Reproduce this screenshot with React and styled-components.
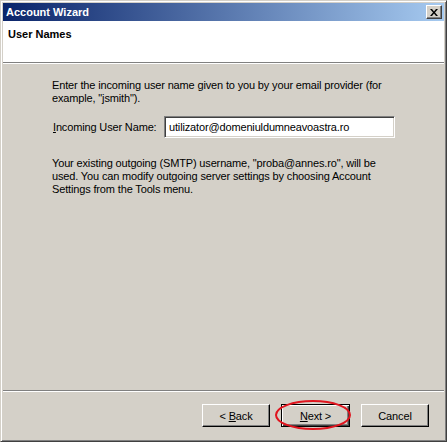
import React from "react";
import styled, { createGlobalStyle } from "styled-components";

const GlobalStyle = createGlobalStyle`
  html, body {
    margin: 0;
    padding: 0;
    background: #d4d0c8;
  }
  body {
    font-family: "Liberation Sans", Arial, sans-serif;
    font-size: 11px;
    letter-spacing: -0.15px;
    color: #000;
  }
`;

const Window = styled.div`
  box-sizing: border-box;
  width: 447px;
  height: 442px;
  display: flex;
  flex-direction: column;
  background: #d4d0c8;
  border-top: 1px solid #d4d0c8;
  border-left: 1px solid #d4d0c8;
  border-right: 1px solid #404040;
  border-bottom: 1px solid #404040;
  box-shadow: inset 1px 1px 0 #fff, inset -1px -1px 0 #808080;
  padding: 2px;
`;

const TitleBar = styled.div`
  height: 18px;
  display: flex;
  align-items: center;
  justify-content: space-between;
  padding: 0 2px 0 3px;
  background: linear-gradient(to right, #0a246a, #a6caf0);
  color: #fff;
  font-weight: 700;
  font-size: 11px;
  letter-spacing: 0;
`;

const CloseButton = styled.div`
  box-sizing: border-box;
  width: 16px;
  height: 14px;
  display: flex;
  align-items: center;
  justify-content: center;
  background: #d4d0c8;
  border-top: 1px solid #fff;
  border-left: 1px solid #fff;
  border-right: 1px solid #404040;
  border-bottom: 1px solid #404040;
  box-shadow: inset -1px -1px 0 #808080;
`;

const Header = styled.div`
  height: 42px;
  background: #fff;
  padding: 7px 0 0 5px;
  box-sizing: border-box;
  font-weight: 700;
  font-size: 11px;
  letter-spacing: 0;
  border-bottom: 1px solid #808080;
  box-shadow: 0 1px 0 #fff;
`;

const Content = styled.div`
  flex: 1;
  padding: 15px 0 0 49px;
  margin-top: 1px;
  border-bottom: 1px solid #808080;
  box-shadow: 0 1px 0 #fff;
`;

const Para = styled.p`
  margin: 0;
  width: 340px;
  line-height: 13px;
  margin-bottom: ${(props) => props.gap || "0"};
`;

const FieldRow = styled.div`
  display: flex;
  align-items: center;
  margin-bottom: 19px;
`;

const Label = styled.label`
  width: 111px;
  padding-left: 1px;
`;

const TextBox = styled.div`
  box-sizing: border-box;
  width: 231px;
  height: 22px;
  display: flex;
  align-items: center;
  padding-left: 4px;
  background: #fff;
  border-top: 1px solid #808080;
  border-left: 1px solid #808080;
  border-right: 1px solid #fff;
  border-bottom: 1px solid #fff;
  box-shadow: inset 1px 1px 0 #404040, inset -1px -1px 0 #d4d0c8;
`;

const ButtonBar = styled.div`
  display: flex;
  justify-content: flex-end;
  gap: 11px;
  padding: 12px 15px 12px 0;
  margin-top: 1px;
`;

const ButtonSlot = styled.div`
  position: relative;
`;

const Button = styled.div`
  box-sizing: border-box;
  width: ${(props) => props.width || "68px"};
  height: 23px;
  display: flex;
  align-items: center;
  justify-content: center;
  background: #d4d0c8;
  border-top: 1px solid ${(props) => (props.primary ? "#000" : "#fff")};
  border-left: 1px solid ${(props) => (props.primary ? "#000" : "#fff")};
  border-right: 1px solid #000;
  border-bottom: 1px solid #000;
  box-shadow: ${(props) =>
    props.primary
      ? "inset 1px 1px 0 #fff, inset -1px -1px 0 #404040, inset -2px -2px 0 #808080"
      : "inset -1px -1px 0 #808080"};
  font-size: 11px;
`;

const Key = styled.span`
  text-decoration: underline;
  text-underline-offset: 1px;
`;

const Highlight = styled.svg`
  position: absolute;
  left: -7px;
  top: -5px;
  pointer-events: none;
`;

export default function App() {
  return (
    <>
      <GlobalStyle />
      <Window>
        <TitleBar>
          <span>Account Wizard</span>
          <CloseButton>
            <svg width="8" height="7" viewBox="0 0 8 7">
              <path d="M0 0h2l2 2.5L6 0h2L5 3.5 8 7H6L4 4.5 2 7H0l3-3.5z" fill="#000" />
            </svg>
          </CloseButton>
        </TitleBar>
        <Header>User Names</Header>
        <Content>
          <Para gap="11px">
            Enter the incoming user name given to you by your email provider (for
            example, "jsmith").
          </Para>
          <FieldRow>
            <Label>
              <Key>I</Key>ncoming User Name:
            </Label>
            <TextBox>utilizator@domeniuldumneavoastra.ro</TextBox>
          </FieldRow>
          <Para>
            Your existing outgoing (SMTP) username, "proba@annes.ro", will be
            used. You can modify outgoing server settings by choosing Account
            Settings from the Tools menu.
          </Para>
        </Content>
        <ButtonBar>
          <Button>
            <span>
              &lt; <Key>B</Key>ack
            </span>
          </Button>
          <ButtonSlot>
            <Button primary width="69px">
              <span>
                <Key>N</Key>ext &gt;
              </span>
            </Button>
            <Highlight width="78" height="32" viewBox="0 0 78 32">
              <ellipse cx="39" cy="16" rx="37" ry="14" fill="none" stroke="#e0141e" strokeWidth="2" />
            </Highlight>
          </ButtonSlot>
          <Button>Cancel</Button>
        </ButtonBar>
      </Window>
    </>
  );
}
